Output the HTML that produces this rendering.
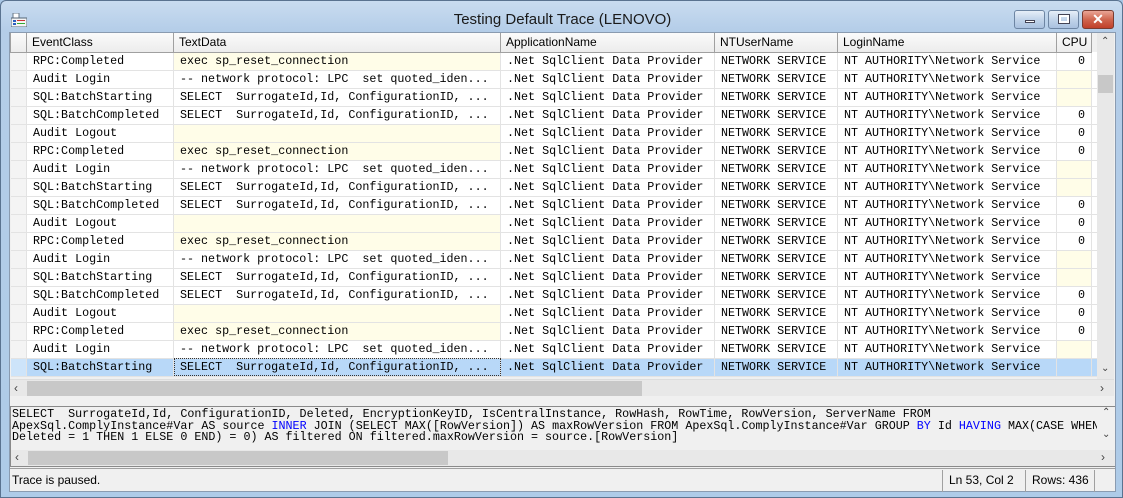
<!DOCTYPE html>
<html><head><style>
*{margin:0;padding:0;box-sizing:border-box}
body{width:1123px;height:498px;overflow:hidden;background:#a9c7e6;font-family:"Liberation Sans",sans-serif;position:relative}
.win{position:absolute;left:0;top:0;width:1123px;height:498px;border:1px solid #5a7390;border-radius:6px 6px 0 0;background:linear-gradient(#c9dcf0,#b4cde8 30px,#aecbe8);}
.title{position:absolute;left:0;top:10px;width:1123px;text-align:center;font-size:15px;color:#1a1a1a}
.btn{position:absolute;top:9px;height:19px;border:1px solid #6d85a3;border-radius:3px;background:linear-gradient(#e6eef8,#c2d4ea 50%,#a9c1df)}
.close{background:linear-gradient(#e9a596,#d0664f 50%,#c0402a);border-color:#7a3b30}
.client{position:absolute;left:8px;top:31px;width:1107px;height:460px;background:#f0f0f0;border:1px solid #8a9bb0}
table{border-collapse:collapse;table-layout:fixed;position:absolute;left:0;top:0}
td{height:18px;border-right:1px solid #e3e3e3;border-bottom:1px solid #e3e3e3;font-family:"Liberation Mono",monospace;font-size:11.7px;padding-left:6px;white-space:pre;overflow:hidden;background:#fff;color:#000;line-height:16px}
th{height:19px;font-weight:normal;font-size:12px;text-align:left;padding-left:5px;background:linear-gradient(#fbfbfb,#ececec);border:1px solid #a0a0a0;border-top:none;color:#000}
td.rh{background:#f4f4f4;padding:0}
td.y{background:#fffde8}
td.n{text-align:right;padding-right:6px}
tr.sel td{background:#b8d8f8}
tr.sel td.rh{background:#cde4fa}
tr.sel td.f{outline:1px dotted #333;outline-offset:-1px}
.vs{position:absolute;left:1087px;top:0;width:17px;height:346px;background:#e8e8e8}
.hs{position:absolute;left:0;top:346px;width:1104px;height:17px;background:#e8e8e8;border-top:1px solid #ddd}
.mono{font-family:"Liberation Mono",monospace}
.kw{color:#0000ff}
</style></head><body>
<div class="win">
<svg style="position:absolute;left:10px;top:12px" width="16" height="14"><rect x="2" y="0" width="6" height="6" fill="#fff" stroke="#678"/><rect x="0" y="5" width="16" height="9" fill="#f4f4f4" stroke="#567"/><rect x="2" y="7" width="3" height="2" fill="#2a5fc0"/><rect x="6" y="7" width="8" height="1" fill="#c33"/><rect x="6" y="10" width="8" height="1" fill="#3a3"/><rect x="2" y="10" width="3" height="2" fill="#2a5fc0"/></svg>
<div class="title">Testing Default Trace (LENOVO)</div>
<div class="btn" style="left:1013px;width:31px"><div style="position:absolute;left:10px;top:9px;width:10px;height:3px;background:#fff;border:1px solid #445"></div></div>
<div class="btn" style="left:1047px;width:31px"><div style="position:absolute;left:10px;top:4px;width:10px;height:8px;border:2px solid #fff;outline:1px solid #445"></div></div>
<div class="btn close" style="left:1081px;width:32px;color:#fff;font-weight:bold;font-size:14px;text-align:center;line-height:17px">✕</div>
<div class="client">
<table style="width:1088px">
<colgroup><col style="width:16px"><col style="width:147px"><col style="width:327px"><col style="width:214px"><col style="width:123px"><col style="width:219px"><col style="width:35px"><col style="width:7px"></colgroup>
<tr><th style="padding:0;height:18px"></th><th>EventClass</th><th>TextData</th><th>ApplicationName</th><th>NTUserName</th><th>LoginName</th><th>CPU</th><th style="padding:0;border:none;background:#f0f0f0"></th></tr>
<tr><td class="rh"></td><td>RPC:Completed</td><td class="y">exec sp_reset_connection</td><td>.Net SqlClient Data Provider</td><td>NETWORK SERVICE</td><td>NT AUTHORITY\Network Service</td><td class="n">0</td><td></td></tr>
<tr><td class="rh"></td><td>Audit Login</td><td>-- network protocol: LPC  set quoted_iden...</td><td>.Net SqlClient Data Provider</td><td>NETWORK SERVICE</td><td>NT AUTHORITY\Network Service</td><td class="y"></td><td></td></tr>
<tr><td class="rh"></td><td>SQL:BatchStarting</td><td>SELECT  SurrogateId,Id, ConfigurationID, ...</td><td>.Net SqlClient Data Provider</td><td>NETWORK SERVICE</td><td>NT AUTHORITY\Network Service</td><td class="y"></td><td></td></tr>
<tr><td class="rh"></td><td>SQL:BatchCompleted</td><td>SELECT  SurrogateId,Id, ConfigurationID, ...</td><td>.Net SqlClient Data Provider</td><td>NETWORK SERVICE</td><td>NT AUTHORITY\Network Service</td><td class="n">0</td><td></td></tr>
<tr><td class="rh"></td><td>Audit Logout</td><td class="y"></td><td>.Net SqlClient Data Provider</td><td>NETWORK SERVICE</td><td>NT AUTHORITY\Network Service</td><td class="n">0</td><td></td></tr>
<tr><td class="rh"></td><td>RPC:Completed</td><td class="y">exec sp_reset_connection</td><td>.Net SqlClient Data Provider</td><td>NETWORK SERVICE</td><td>NT AUTHORITY\Network Service</td><td class="n">0</td><td></td></tr>
<tr><td class="rh"></td><td>Audit Login</td><td>-- network protocol: LPC  set quoted_iden...</td><td>.Net SqlClient Data Provider</td><td>NETWORK SERVICE</td><td>NT AUTHORITY\Network Service</td><td class="y"></td><td></td></tr>
<tr><td class="rh"></td><td>SQL:BatchStarting</td><td>SELECT  SurrogateId,Id, ConfigurationID, ...</td><td>.Net SqlClient Data Provider</td><td>NETWORK SERVICE</td><td>NT AUTHORITY\Network Service</td><td class="y"></td><td></td></tr>
<tr><td class="rh"></td><td>SQL:BatchCompleted</td><td>SELECT  SurrogateId,Id, ConfigurationID, ...</td><td>.Net SqlClient Data Provider</td><td>NETWORK SERVICE</td><td>NT AUTHORITY\Network Service</td><td class="n">0</td><td></td></tr>
<tr><td class="rh"></td><td>Audit Logout</td><td class="y"></td><td>.Net SqlClient Data Provider</td><td>NETWORK SERVICE</td><td>NT AUTHORITY\Network Service</td><td class="n">0</td><td></td></tr>
<tr><td class="rh"></td><td>RPC:Completed</td><td class="y">exec sp_reset_connection</td><td>.Net SqlClient Data Provider</td><td>NETWORK SERVICE</td><td>NT AUTHORITY\Network Service</td><td class="n">0</td><td></td></tr>
<tr><td class="rh"></td><td>Audit Login</td><td>-- network protocol: LPC  set quoted_iden...</td><td>.Net SqlClient Data Provider</td><td>NETWORK SERVICE</td><td>NT AUTHORITY\Network Service</td><td class="y"></td><td></td></tr>
<tr><td class="rh"></td><td>SQL:BatchStarting</td><td>SELECT  SurrogateId,Id, ConfigurationID, ...</td><td>.Net SqlClient Data Provider</td><td>NETWORK SERVICE</td><td>NT AUTHORITY\Network Service</td><td class="y"></td><td></td></tr>
<tr><td class="rh"></td><td>SQL:BatchCompleted</td><td>SELECT  SurrogateId,Id, ConfigurationID, ...</td><td>.Net SqlClient Data Provider</td><td>NETWORK SERVICE</td><td>NT AUTHORITY\Network Service</td><td class="n">0</td><td></td></tr>
<tr><td class="rh"></td><td>Audit Logout</td><td class="y"></td><td>.Net SqlClient Data Provider</td><td>NETWORK SERVICE</td><td>NT AUTHORITY\Network Service</td><td class="n">0</td><td></td></tr>
<tr><td class="rh"></td><td>RPC:Completed</td><td class="y">exec sp_reset_connection</td><td>.Net SqlClient Data Provider</td><td>NETWORK SERVICE</td><td>NT AUTHORITY\Network Service</td><td class="n">0</td><td></td></tr>
<tr><td class="rh"></td><td>Audit Login</td><td>-- network protocol: LPC  set quoted_iden...</td><td>.Net SqlClient Data Provider</td><td>NETWORK SERVICE</td><td>NT AUTHORITY\Network Service</td><td class="y"></td><td></td></tr>
<tr class="sel"><td class="rh"></td><td>SQL:BatchStarting</td><td class="f">SELECT  SurrogateId,Id, ConfigurationID, ...</td><td>.Net SqlClient Data Provider</td><td>NETWORK SERVICE</td><td>NT AUTHORITY\Network Service</td><td></td><td></td></tr>
</table>
<div class="vs"><div style="position:absolute;top:3px;left:4px;font-size:10px;color:#444">&#8963;</div><div style="position:absolute;left:1px;top:42px;width:15px;height:18px;background:#c8c8c8"></div><div style="position:absolute;top:330px;left:4px;font-size:10px;color:#444">&#8964;</div></div>
<div class="hs"><div style="position:absolute;left:4px;top:1px;font-size:12px;color:#444">&lsaquo;</div><div style="position:absolute;left:17px;top:1px;width:615px;height:15px;background:#c8c8c8"></div><div style="position:absolute;left:1090px;top:1px;font-size:12px;color:#444">&rsaquo;</div></div>
<div style="position:absolute;left:0;top:373px;width:1105px;height:61px;background:#f0f0f0;border:1px solid #8a8a8a">
<div class="mono" style="position:absolute;left:1px;top:2px;font-size:11.7px;line-height:11.5px;white-space:pre;color:#000">SELECT  SurrogateId,Id, ConfigurationID, Deleted, EncryptionKeyID, IsCentralInstance, RowHash, RowTime, RowVersion, ServerName FROM
ApexSql.ComplyInstance#Var AS source <span class="kw">INNER</span> JOIN (SELECT MAX([RowVersion]) AS maxRowVersion FROM ApexSql.ComplyInstance#Var GROUP <span class="kw">BY</span> Id <span class="kw">HAVING</span> MAX(CASE WHEN
Deleted = 1 THEN 1 ELSE 0 END) = 0) AS filtered ON filtered.maxRowVersion = source.[RowVersion]</div>
<div style="position:absolute;left:1086px;top:0;width:18px;height:43px;background:#f0f0f0;font-size:10px;color:#444;padding-left:5px">&#8963;<br><br>&#8964;</div>
<div style="position:absolute;left:0;top:43px;width:1104px;height:16px;background:#e8e8e8"><div style="position:absolute;left:4px;top:0;font-size:12px;color:#444">&lsaquo;</div><div style="position:absolute;left:17px;top:1px;width:420px;height:14px;background:#c8c8c8"></div><div style="position:absolute;left:1090px;top:0;font-size:12px;color:#444">&rsaquo;</div></div>
</div>
<div style="position:absolute;left:0;top:435px;width:1105px;height:24px;border-top:1px solid #a0a0a0;font-size:12px">
<div style="position:absolute;left:2px;top:4px">Trace is paused.</div>
<div style="position:absolute;left:932px;top:1px;width:80px;height:22px;border-left:1px solid #a0a0a0;padding:3px 0 0 6px">Ln 53, Col 2</div>
<div style="position:absolute;left:1015px;top:1px;width:70px;height:22px;border-left:1px solid #a0a0a0;border-right:1px solid #a0a0a0;padding:3px 0 0 6px">Rows: 436</div>
</div>
</div>
</div>
</body></html>
